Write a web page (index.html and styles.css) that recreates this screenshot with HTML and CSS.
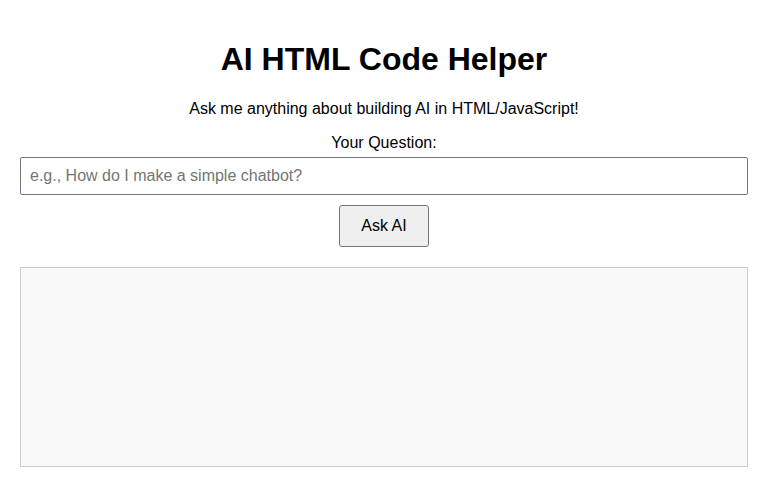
FILE: index.html
```html
<!DOCTYPE html>
<html>
<head>
<meta charset="utf-8">
<link rel="stylesheet" href="styles.css">
</head>
<body>
<h1 class="title">AI HTML Code Helper</h1>
<p class="intro">Ask me anything about building AI in HTML/JavaScript!</p>
<label class="label" for="q">Your Question:</label>
<input class="question" id="q" type="text" placeholder="e.g., How do I make a simple chatbot?">
<div class="actions"><button class="ask">Ask AI</button></div>
<div class="output"></div>
</body>
</html>
```
FILE: styles.css
```css
html, body { background: #fff; }
body {
  margin: 20px;
  font-family: "Liberation Sans", Arial, sans-serif;
  color: #000;
  text-align: center;
}
.title {
  font-size: 32px;
  font-weight: bold;
  margin: 21px 0 22px;
}
.intro {
  font-size: 16px;
  margin: 16px 0;
}
.label {
  display: block;
  font-size: 16px;
  margin-bottom: 5px;
}
.question {
  display: block;
  width: 100%;
  box-sizing: border-box;
  height: 38px;
  padding: 0 9px;
  font-family: "Liberation Sans", Arial, sans-serif;
  font-size: 16px;
  border: 1px solid #767676;
  border-radius: 2px;
  background: #fff;
  margin: 0;
}
.question::placeholder { color: #757575; }
.actions {
  margin-top: 10px;
  display: flex;
  justify-content: center;
}
.ask {
  width: 90px;
  height: 42px;
  font-family: "Liberation Sans", Arial, sans-serif;
  font-size: 16px;
  color: #000;
  background: #efefef;
  border: 1px solid #767676;
  border-radius: 3px;
  padding: 0;
}
.output {
  margin-top: 20px;
  height: 200px;
  box-sizing: border-box;
  border: 1px solid #ccc;
  background: #f9f9f9;
  text-align: left;
}
```
